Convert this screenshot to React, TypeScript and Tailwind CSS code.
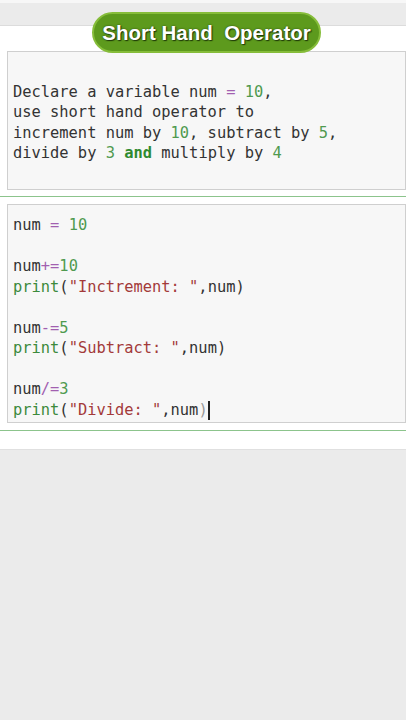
import React from "react";

const mono = { fontFamily: '"DejaVu Sans Mono", "Liberation Mono", monospace' };

const N = ({ children }: { children: React.ReactNode }) => <span className="text-[#4f9a4f]">{children}</span>;
const O = ({ children }: { children: React.ReactNode }) => <span className="text-[#a25fb0]">{children}</span>;
const P = () => <span className="text-[#3c8a3c]">print</span>;
const S = ({ children }: { children: React.ReactNode }) => <span className="text-[#a33a3a]">{children}</span>;

export default function App() {
  return (
    <div className="relative w-[406px] h-[720px] overflow-hidden bg-white text-[#333]">
      <div className="h-[3px] bg-[#f7f7f7]" />
      <div className="h-[23px] bg-[#ebebeb] border-b border-[#dcdcdc]" />
      <div className="mt-[25px] ml-[7px] h-[139px] border border-[#cfcfcf] bg-[#f7f7f7] pl-[5px] pt-[30px] text-[15.4px] leading-[20.4px] whitespace-pre" style={mono}>
        <div>Declare a variable num <O>=</O> <N>10</N>,</div>
        <div>use short hand operator to</div>
        <div>increment num by <N>10</N>, subtract by <N>5</N>,</div>
        <div>divide by <N>3</N> <span className="font-bold text-[#2f8a2f]">and</span> multiply by <N>4</N></div>
      </div>
      <div className="mt-[6px] border-y border-[#8cc48c] pt-[7px] pb-[7px] bg-white">
        <div className="ml-[7px] h-[219px] border border-[#cfcfcf] bg-[#f7f7f7] pl-[5px] pt-[10px] text-[15.4px] leading-[20.55px] whitespace-pre" style={mono}>
          <div>num <O>=</O> <N>10</N></div>
          <div>&nbsp;</div>
          <div>num<O>+=</O><N>10</N></div>
          <div><P />(<S>"Inctrement: "</S>,num)</div>
          <div>&nbsp;</div>
          <div>num<O>-=</O><N>5</N></div>
          <div><P />(<S>"Subtract: "</S>,num)</div>
          <div>&nbsp;</div>
          <div>num<O>/=</O><N>3</N></div>
          <div><P />(<S>"Divide: "</S>,num<span className="text-[#999]">)</span><span className="inline-block w-[2px] h-[19px] bg-[#222] align-middle" /></div>
        </div>
      </div>
      <div className="h-[18px] bg-white" />
      <div className="h-[300px] bg-[#ebebeb] border-t border-[#e0e0e0]" />
      <div className="absolute left-[92px] top-[12px] w-[229px] h-[41px] rounded-full bg-[#5d9a1d] border-2 border-[#86bd3a] flex items-center justify-center pt-[2px]">
        <span
          className="text-white font-bold text-[20.5px] whitespace-pre"
          style={{ fontFamily: '"Liberation Sans", Arial, sans-serif', textShadow: "1px 1px 1px #1f3a08, 0 0 2px #2a4a10" }}
        >
          Short Hand  Operator
        </span>
      </div>
    </div>
  );
}
